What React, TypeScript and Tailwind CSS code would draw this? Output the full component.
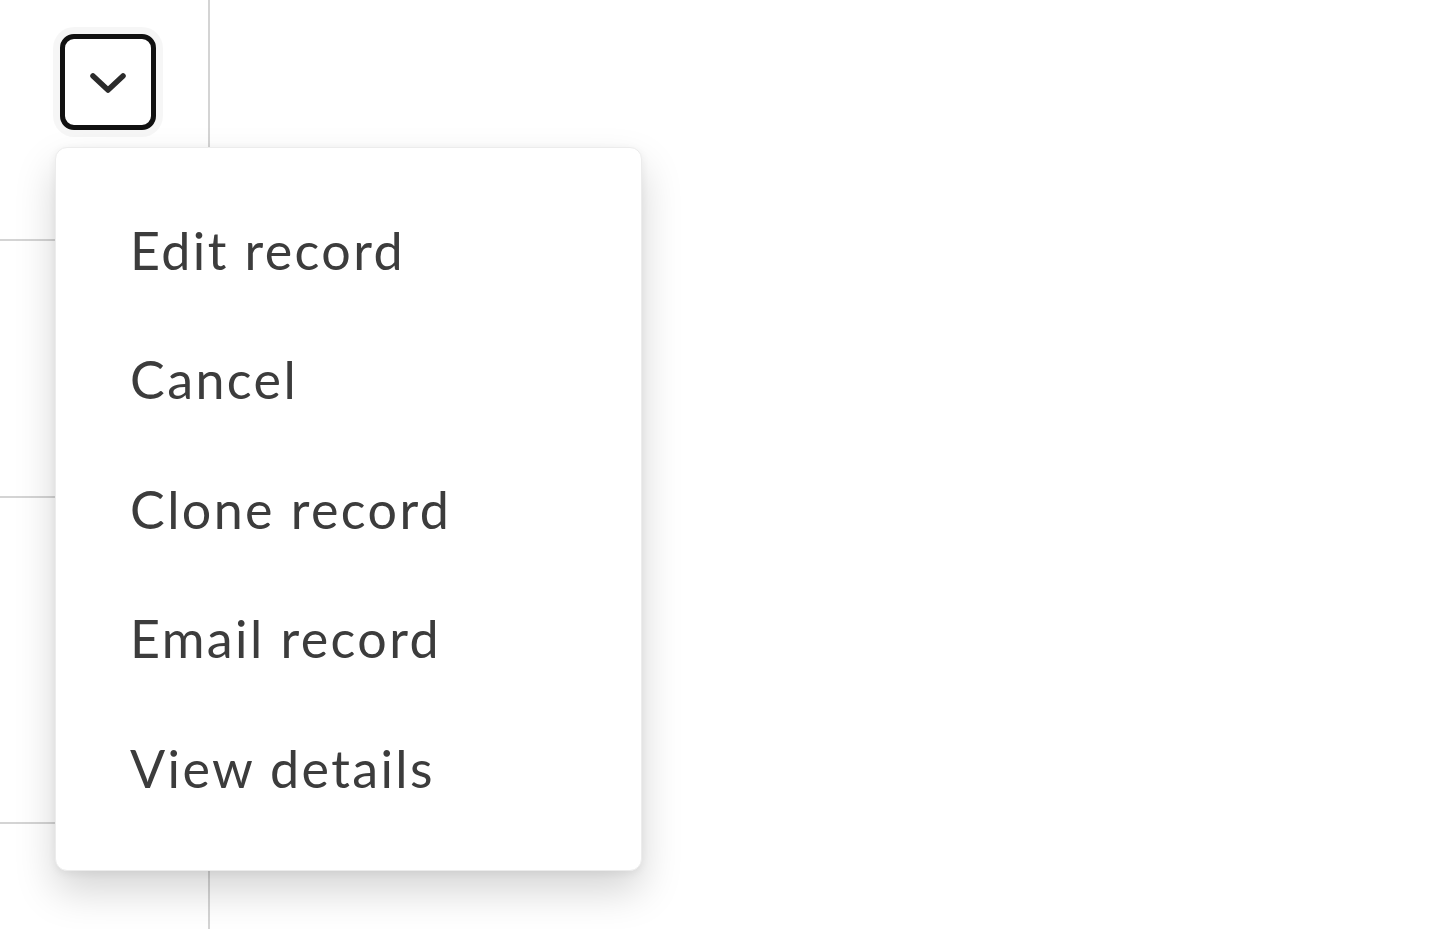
import { useState } from 'react'

const menuItems = ['Edit record', 'Cancel', 'Clone record', 'Email record', 'View details']

function ChevronDown() {
  return (
    <svg width="40" height="24" viewBox="0 0 40 24" fill="none" aria-hidden="true">
      <path d="M5 4 L20 18 L35 4" stroke="#2b2b2b" strokeWidth="5.5" strokeLinecap="round" strokeLinejoin="round" />
    </svg>
  )
}

export default function App() {
  const [open] = useState(true)

  return (
    <div className="relative h-[929px] w-full overflow-hidden bg-white" style={{ fontFamily: 'Lato, "Noto Sans", sans-serif' }}>
      {/* Table first column */}
      <div className="flex h-full w-[210px] flex-col border-r-2 border-[#d4d4d4]">
        <div className="h-[241px] shrink-0 border-b-2 border-[#d4d4d4] pl-[60px] pt-[34px]">
          <button className="flex h-[96px] w-[96px] items-center justify-center rounded-[14px] border-[5px] border-[#111] bg-white pt-1 shadow-[0_0_0_7px_rgba(0,0,0,0.035)]">
            <ChevronDown />
          </button>
        </div>
        <div className="h-[257px] shrink-0 border-b-2 border-[#d4d4d4]" />
        <div className="h-[326px] shrink-0 border-b-2 border-[#d4d4d4]" />
        <div className="flex-1" />
      </div>

      {/* Dropdown menu */}
      {open && (
        <div className="absolute left-[55px] top-[147px] w-[587px] rounded-[12px] border border-[#ececec] bg-white py-[37px] shadow-[0_20px_40px_rgba(0,0,0,0.17),0_2px_8px_rgba(0,0,0,0.06)]">
          {menuItems.map((item) => (
            <div
              key={item}
              className="flex h-[129.5px] items-center pl-[74px] text-[52px] tracking-[2.4px] text-[#3c3c3c]"
            >
              {item}
            </div>
          ))}
        </div>
      )}
    </div>
  )
}
